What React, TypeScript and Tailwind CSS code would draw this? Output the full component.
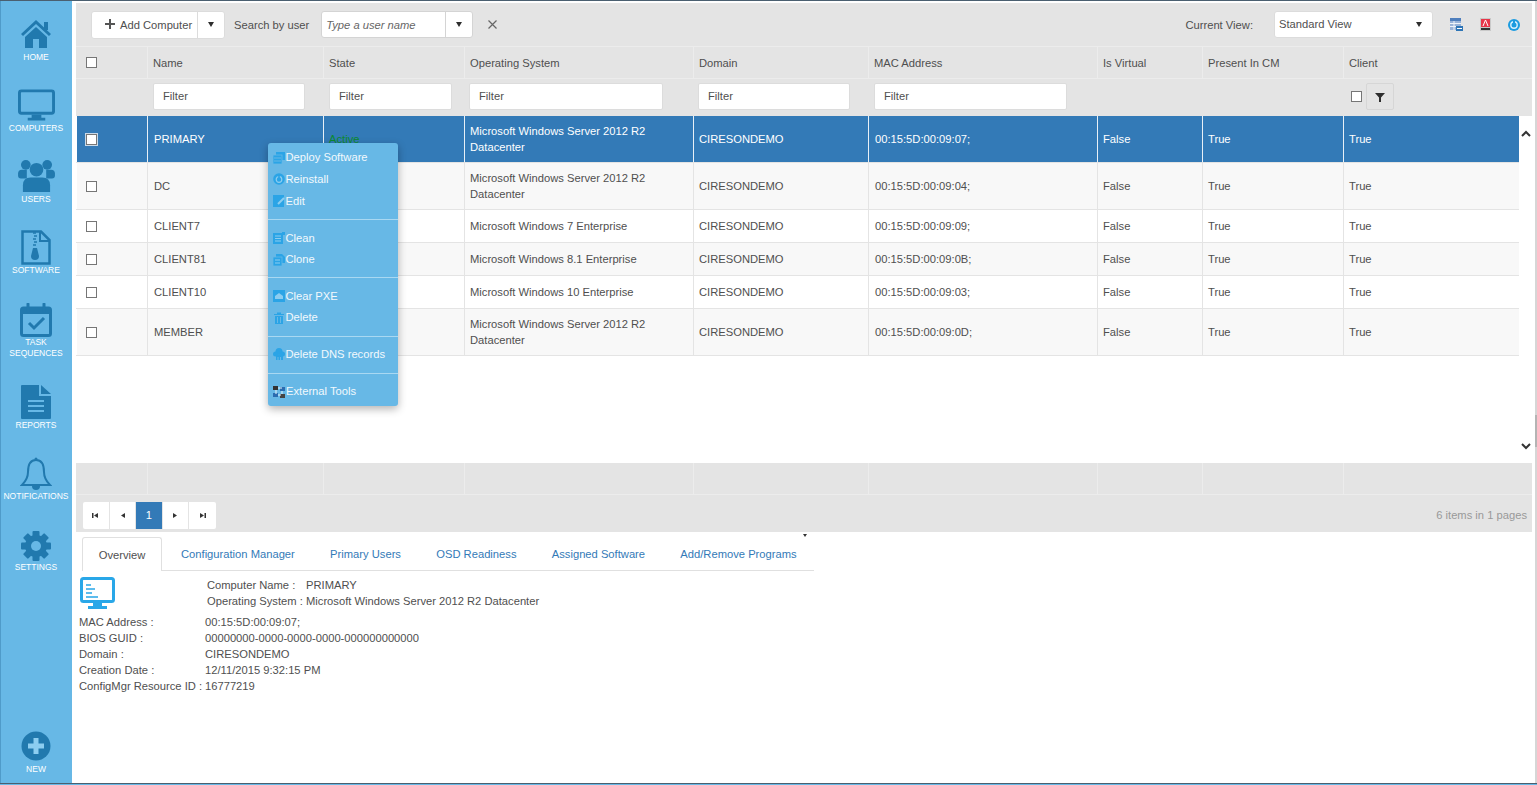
import type { ReactNode } from 'react';

const COLS = 'grid grid-cols-[71px_176px_141px_229px_175px_229px_105px_141px_176px]';
const ICON = '#2179ae';
const MI = '#2ba4e6';

const rows = [
  { name: 'PRIMARY', os: ['Microsoft Windows Server 2012 R2', 'Datacenter'], mac: '07', h: 'h-[47px]', alt: false, selected: true },
  { name: 'DC', os: ['Microsoft Windows Server 2012 R2', 'Datacenter'], mac: '04', h: 'h-[47px]', alt: true, selected: false },
  { name: 'CLIENT7', os: ['Microsoft Windows 7 Enterprise'], mac: '09', h: 'h-[33px]', alt: false, selected: false },
  { name: 'CLIENT81', os: ['Microsoft Windows 8.1 Enterprise'], mac: '0B', h: 'h-[33px]', alt: true, selected: false },
  { name: 'CLIENT10', os: ['Microsoft Windows 10 Enterprise'], mac: '03', h: 'h-[33px]', alt: false, selected: false },
  { name: 'MEMBER', os: ['Microsoft Windows Server 2012 R2', 'Datacenter'], mac: '0D', h: 'h-[47px]', alt: true, selected: false },
];

function HomeIcon() {
  return (
    <svg width="32" height="30" viewBox="0 0 32 30" fill={ICON}>
      <path d="M16 1 L31 15 L29 17 L16 5 L3 17 L1 15 Z" />
      <rect x="24" y="3" width="4" height="8" />
      <path d="M16 8 L27 18 V29 H19 V20 H13 V29 H5 V18 Z" />
    </svg>
  );
}

function ComputerIcon() {
  return (
    <svg width="37" height="32" viewBox="0 0 38 32">
      <rect x="1.500" y="1.500" width="35" height="23" rx="2" fill="none" stroke={ICON} strokeWidth="3" />
      <path d="M14 26 H24 V29 H28 V32 H10 V29 H14 Z" fill={ICON} />
    </svg>
  );
}

function UsersIcon() {
  return (
    <svg width="37" height="33" viewBox="0 0 38 34" fill={ICON}>
      <circle cx="8" cy="6" r="5" />
      <circle cx="30" cy="6" r="5" />
      <path d="M0 15 Q0 11 4 11 H9 V20 H3 Q0 20 0 17 Z" />
      <path d="M38 15 Q38 11 34 11 H29 V20 H35 Q38 20 38 17 Z" />
      <circle cx="19" cy="11" r="7" />
      <path d="M5 34 V27 Q5 19 13 19 H25 Q33 19 33 27 V34 Z" />
    </svg>
  );
}

function SoftwareIcon() {
  return (
    <svg width="30" height="35" viewBox="0 0 30 35" fill="none" stroke={ICON} strokeWidth="2.500">
      <path d="M1.500 1.500 H20 L28.500 10 V33.500 H1.500 Z" />
      <path d="M19 2 V11 H28" strokeWidth="2" />
      <path d="M12 3 H15 M13 6 H16 M12 9 H15 M13 12 H16 M12 15 H15" strokeWidth="1.600" />
      <path d="M12 18 H16 L18 26 A4 4 0 0 1 10 26 Z" fill={ICON} stroke="none" />
    </svg>
  );
}

function TaskIcon() {
  return (
    <svg width="32" height="34" viewBox="0 0 32 34" fill="none" stroke={ICON}>
      <rect x="1.500" y="5" width="29" height="27.500" rx="2" strokeWidth="3" />
      <rect x="1" y="5" width="30" height="6" fill={ICON} stroke="none" />
      <path d="M8 1 V8 M24 1 V8" strokeWidth="3" strokeLinecap="round" />
      <path d="M9 20 L14 25 L24 15" strokeWidth="3" />
    </svg>
  );
}

function ReportIcon() {
  return (
    <svg width="30" height="34" viewBox="0 0 30 34">
      <path d="M0 1 Q0 0 1 0 H18 V11 H30 V33 Q30 34 29 34 H1 Q0 34 0 33 Z" fill={ICON} />
      <path d="M20 0 L30 9 H20 Z" fill={ICON} />
      <path d="M7 16 H23 M7 21 H23 M7 26 H23" stroke="#67b8e6" strokeWidth="2" />
    </svg>
  );
}

function BellIcon() {
  return (
    <svg width="32" height="34" viewBox="0 0 32 34" fill="none" stroke={ICON} strokeWidth="2">
      <path d="M16 3 C9 3 8 9 8 15 C8 21 5 25 2 28 H30 C27 25 24 21 24 15 C24 9 23 3 16 3 Z" />
      <circle cx="16" cy="2" r="1.500" fill={ICON} stroke="none" />
      <path d="M12 29 A4 4 0 0 0 20 29 Z" fill={ICON} stroke="none" />
    </svg>
  );
}

function GearIcon() {
  return (
    <svg width="30" height="30" viewBox="0 0 30 30">
      <g fill={ICON}>
        <circle cx="15" cy="15" r="11" />
        {[0, 45, 90, 135, 180, 225, 270, 315].map((a) => (
          <rect key={a} x="11.500" y="0" width="7" height="6" rx="1" transform={`rotate(${a} 15 15)`} />
        ))}
      </g>
      <circle cx="15" cy="15" r="5" fill="#67b8e6" />
    </svg>
  );
}

function PlusCircleIcon() {
  return (
    <svg width="30" height="30" viewBox="0 0 30 30">
      <circle cx="15" cy="15" r="14.500" fill={ICON} />
      <path d="M12.500 7 H17.500 V12.500 H23 V17.500 H17.500 V23 H12.500 V17.500 H7 V12.500 H12.500 Z" fill="#8ccdf0" />
    </svg>
  );
}

function NavItem({ icon, label, h = 'h-[71px]', box = 'h-[37px]' }: { icon: ReactNode; label: ReactNode; h?: string; box?: string }) {
  return (
    <div className={`flex flex-col items-center ${h}`}>
      <div className={`flex items-end justify-center ${box}`}>{icon}</div>
      <div className="text-center text-[8.500px] leading-[11px] text-white">{label}</div>
    </div>
  );
}

function Sidebar() {
  return (
    <aside className="flex w-[72px] shrink-0 flex-col border-l border-[#4f9bc9] bg-[#67b8e6] pt-[11px] pr-[1px]">
      <NavItem box="h-[40px] pb-[3px]" icon={<HomeIcon />} label="HOME" />
      <NavItem box="h-[40px] pb-[2px]" icon={<ComputerIcon />} label="COMPUTERS" />
      <NavItem box="h-[40px] pb-[2px]" icon={<UsersIcon />} label="USERS" />
      <NavItem h="h-[72px]" box="h-[40px]" icon={<SoftwareIcon />} label="SOFTWARE" />
      <NavItem h="h-[83px]" box="h-[40px]" icon={<TaskIcon />} label={<>TASK<br />SEQUENCES</>} />
      <NavItem box="h-[40px] pb-[1px]" icon={<ReportIcon />} label="REPORTS" />
      <NavItem box="h-[40px]" icon={<BellIcon />} label="NOTIFICATIONS" />
      <NavItem box="h-[40px] pb-[1px]" icon={<GearIcon />} label="SETTINGS" />
      <div className="mt-auto mb-[10px] flex flex-col items-center">
        <PlusCircleIcon />
        <div className="mt-[3px] text-[8.500px] leading-[11px] text-white">NEW</div>
      </div>
    </aside>
  );
}

function Caret() {
  return <span className="inline-block h-0 w-0 border-x-[3.500px] border-t-[5px] border-x-transparent border-t-[#2e2e2e]" />;
}

function CheckBox({ className = '' }: { className?: string }) {
  return <span className={`inline-block h-[11px] w-[11px] border border-[#767676] bg-white ${className}`} />;
}

function Toolbar() {
  return (
    <div className="flex h-[43px] items-center bg-[#e4e4e4] pr-[12px] pl-[15px]">
      <div className="flex h-[28px] w-[134px] items-center rounded-[3px] border border-[#dcdcdc] bg-white">
        <div className="flex flex-1 items-center pl-[13px]">
          <svg width="10" height="10" viewBox="0 0 10 10"><path d="M4 0 H6 V4 H10 V6 H6 V10 H4 V6 H0 V4 H4 Z" fill="#555" /></svg>
          <span className="ml-[5px] pt-[1px]">Add Computer</span>
        </div>
        <div className="flex h-full w-[27px] items-center justify-center border-l border-[#dcdcdc]"><Caret /></div>
      </div>
      <span className="ml-[9px] pt-[1px]">Search by user</span>
      <div className="ml-[12px] flex h-[27px] w-[152px] items-center rounded-[3px] border border-[#d4d4d4] bg-white">
        <span className="flex-1 pt-[1px] pl-[4px] text-[#666] italic">Type a user name</span>
        <div className="flex h-full w-[27px] items-center justify-center border-l border-[#d4d4d4]"><Caret /></div>
      </div>
      <svg className="ml-[15px]" width="9" height="9" viewBox="0 0 9 9"><path d="M0.500 0.500 L8.500 8.500 M8.500 0.500 L0.500 8.500" stroke="#666" strokeWidth="1.200" /></svg>
      <span className="ml-auto pt-[1px]">Current View:</span>
      <div className="ml-[21px] flex h-[27px] w-[159px] items-center justify-between rounded-[3px] border border-[#dcdcdc] bg-white pr-[10px] pl-[4px]">
        <span>Standard View</span>
        <Caret />
      </div>
      <svg className="ml-[17px]" width="13" height="13" viewBox="0 0 13 13">
        <rect x="0" y="0" width="11" height="12" fill="#9ab3d8" />
        <rect x="0" y="0" width="11" height="3" fill="#4f7fbd" />
        <path d="M0 5.500 H11 M0 8.500 H11 M4 3 V12" stroke="#eef3f9" />
        <rect x="6" y="8" width="7" height="5" fill="#2e75b6" />
        <rect x="7" y="10" width="5" height="1" fill="#fff" />
      </svg>
      <svg className="ml-[17px]" width="11" height="13" viewBox="0 0 11 13">
        <rect width="11" height="13" fill="#c9c9c9" />
        <rect x="1" y="1" width="9" height="8" fill="#e8364a" />
        <path d="M3 8 L5.500 2 L8 8" stroke="#fff" fill="none" />
        <rect x="1" y="10" width="9" height="2" fill="#333" />
      </svg>
      <svg className="ml-[17px]" width="12" height="12" viewBox="0 0 12 12">
        <circle cx="6" cy="6" r="6" fill="#1b9be0" />
        <circle cx="6" cy="6" r="3.200" fill="none" stroke="#d9f0fc" strokeWidth="1.400" />
        <rect x="5" y="1" width="2" height="3" fill="#1b9be0" />
      </svg>
    </div>
  );
}

function Filter({ w }: { w: string }) {
  return (
    <div className={`flex h-[27px] ${w} items-center rounded-[2px] border border-[#dcdcdc] bg-white pl-[9px]`}>Filter</div>
  );
}

function HeaderRows() {
  const heads = ['Name', 'State', 'Operating System', 'Domain', 'MAC Address', 'Is Virtual', 'Present In CM', 'Client'];
  return (
    <div className="bg-[#e4e4e4]">
      <div className={`${COLS} h-[33px] border-y border-[#ececec]`}>
        <div className="flex items-center pl-[10px]"><CheckBox /></div>
        {heads.map((h) => (
          <div key={h} className="flex items-center border-l border-[#ececec] pt-[1px] pl-[5px]">{h}</div>
        ))}
      </div>
      <div className={`${COLS} h-[37px] items-center pb-[2px]`}>
        <div />
        <div className="pl-[6px]"><Filter w="w-[152px]" /></div>
        <div className="pl-[6px]"><Filter w="w-[123px]" /></div>
        <div className="pl-[5px]"><Filter w="w-[194px]" /></div>
        <div className="pl-[5px]"><Filter w="w-[152px]" /></div>
        <div className="pl-[6px]"><Filter w="w-[193px]" /></div>
        <div />
        <div />
        <div className="flex items-center pl-[8px]">
          <CheckBox />
          <div className="ml-[4px] flex h-[27px] w-[28px] items-center justify-center rounded-[2px] border border-[#d6d6d6]">
            <svg width="10" height="10" viewBox="0 0 10 10"><path d="M0 1 H10 L6 5.500 V10 H4 V5.500 Z" fill="#2e2e2e" /></svg>
          </div>
        </div>
      </div>
    </div>
  );
}

function Row({ r }: { r: (typeof rows)[number] }) {
  const line = r.selected ? 'border-[#e8f0f7]' : 'border-[#e4e4e4]';
  const bg = r.selected ? 'bg-[#337ab7] text-white' : r.alt ? 'bg-[#f8f8f8]' : 'bg-white';
  const cell = `flex items-center border-l pl-[5px] ${line}`;
  return (
    <div className={`${COLS} ${r.h} border-b border-[#e4e4e4] ${bg}`}>
      <div className="flex items-center border-l border-white pl-[9px]">
        <CheckBox className={r.selected ? 'outline outline-1 outline-[#c9d9e8]' : ''} />
      </div>
      <div className={`${cell} pl-[6px]`}>{r.name}</div>
      <div className={`${cell} ${r.selected ? 'text-[#0b8a2f]' : ''}`}>{r.selected ? 'Active' : ''}</div>
      <div className={`${cell} leading-[16px]`}><div>{r.os.map((t) => <div key={t}>{t}</div>)}</div></div>
      <div className={cell}>CIRESONDEMO</div>
      <div className={`${cell} pl-[6px]`}>00:15:5D:00:09:{r.mac};</div>
      <div className={cell}>False</div>
      <div className={cell}>True</div>
      <div className={cell}>True</div>
    </div>
  );
}

function Chevron({ up }: { up?: boolean }) {
  return (
    <svg width="10" height="7" viewBox="0 0 10 7" fill="none" stroke="#333" strokeWidth="2">
      <path d={up ? 'M1 6 L5 2 L9 6' : 'M1 1 L5 5 L9 1'} />
    </svg>
  );
}

function Grid() {
  return (
    <div className="flex h-[347px]">
      <div className="w-[1443px]">
        {rows.map((r) => <Row key={r.name} r={r} />)}
      </div>
      <div className="flex w-[13px] flex-col items-center justify-between pt-[14px] pb-[13px]">
        <Chevron up />
        <Chevron />
      </div>
    </div>
  );
}

function GridFooter() {
  return (
    <div className={`${COLS} h-[32px] border-b border-[#ececec] bg-[#e4e4e4]`}>
      <div />
      {Array.from({ length: 8 }, (_, i) => <div key={i} className="border-l border-[#ececec]" />)}
    </div>
  );
}

function PagerBtn({ children, active }: { children: ReactNode; active?: boolean }) {
  return (
    <div className={`flex h-[27px] w-[26.500px] items-center justify-center border-r border-[#e4e4e4] last:border-r-0 ${active ? 'bg-[#337ab7] text-white' : 'bg-white'}`}>
      {children}
    </div>
  );
}

function Tri({ dir, bar }: { dir: 'l' | 'r'; bar?: boolean }) {
  return (
    <svg width="7" height="7" viewBox="0 0 7 7" fill="#333">
      {dir === 'l' ? <path d="M6 1 V6 L2 3.500 Z" /> : <path d="M1 1 V6 L5 3.500 Z" />}
      {bar && <rect x={dir === 'l' ? 0 : 5.500} y="1" width="1.500" height="5" />}
    </svg>
  );
}

function Pager() {
  return (
    <div className="flex h-[37px] items-center justify-between bg-[#e4e4e4] pt-[3px] pr-[5px] pl-[6px]">
      <div className="flex overflow-hidden rounded-[3px] border border-[#e4e4e4]">
        <PagerBtn><Tri dir="l" bar /></PagerBtn>
        <PagerBtn><Tri dir="l" /></PagerBtn>
        <PagerBtn active>1</PagerBtn>
        <PagerBtn><Tri dir="r" /></PagerBtn>
        <PagerBtn><Tri dir="r" bar /></PagerBtn>
      </div>
      <span className="text-[#999]">6 items in 1 pages</span>
    </div>
  );
}

function Tabs() {
  const tabs = ['Configuration Manager', 'Primary Users', 'OSD Readiness', 'Assigned Software', 'Add/Remove Programs'];
  return (
    <div className="mt-[5px] ml-[6px] flex h-[34px] w-[732px] border-b border-[#e0e0e0]">
      <div className="flex h-[34px] w-[80px] items-center justify-center rounded-t-[3px] border-x border-t border-[#e0e0e0] bg-white pt-[1px]">Overview</div>
      <div className="ml-[19px] flex gap-[35.300px]">
        {tabs.map((t) => (
          <div key={t} className="flex items-center pt-[1px] text-[#337ab7]">{t}</div>
        ))}
      </div>
    </div>
  );
}

function Overview() {
  const details = [
    ['MAC Address :', '00:15:5D:00:09:07;'],
    ['BIOS GUID :', '00000000-0000-0000-0000-000000000000'],
    ['Domain :', 'CIRESONDEMO'],
    ['Creation Date :', '12/11/2015 9:32:15 PM'],
    ['ConfigMgr Resource ID :', '16777219'],
  ];
  return (
    <div className="leading-[16px]">
      <div className="flex h-[43px] items-start pt-[6px] pl-[4px]">
        <svg width="35" height="33" viewBox="0 0 35 33">
          <rect x="1.500" y="1.500" width="32" height="23" rx="2" fill="#fff" stroke="#29a7e8" strokeWidth="3" />
          <path d="M6 8 H11 M6 12 H15 M6 16 H12 M6 20 H18" stroke="#29a7e8" strokeWidth="1.500" />
          <path d="M13 26 H22 V29 H27 V32 H8 V29 H13 Z" fill="#29a7e8" />
        </svg>
        <div className="ml-[92px] grid grid-cols-[99px_auto]">
          <div>Computer Name :</div><div>PRIMARY</div>
          <div>Operating System :</div><div>Microsoft Windows Server 2012 R2 Datacenter</div>
        </div>
      </div>
      <div className="ml-[3px] grid grid-cols-[126px_auto]">
        {details.map(([k, v]) => (
          <div key={k} className="contents">
            <div className="whitespace-nowrap">{k}</div>
            <div>{v}</div>
          </div>
        ))}
      </div>
    </div>
  );
}

const menuIcons: Record<string, ReactNode> = {
  'Deploy Software': (
    <>
      <rect x="3" y="0" width="9" height="8" fill={MI} />
      <rect x="0" y="3" width="9" height="9" fill={MI} stroke="#67b8e6" strokeWidth="0.800" />
      <path d="M1 6 H8 M1 9 H8" stroke="#67b8e6" />
    </>
  ),
  Reinstall: (
    <>
      <circle cx="6" cy="6" r="5.800" fill={MI} />
      <circle cx="6" cy="6.500" r="2.800" fill="none" stroke="#8ccdf0" strokeWidth="1.200" />
      <rect x="5.200" y="2" width="1.600" height="3" fill={MI} />
    </>
  ),
  Edit: (
    <>
      <rect x="0" y="0" width="11" height="12" fill={MI} />
      <path d="M5 9 L11 3" stroke="#8ccdf0" strokeWidth="2" />
    </>
  ),
  Clean: (
    <>
      <rect x="0" y="1" width="10" height="11" fill={MI} />
      <path d="M2 4 H8 M2 6.500 H8 M2 9 H8" stroke="#8ccdf0" />
      <rect x="9" y="0" width="3" height="3" fill={MI} />
    </>
  ),
  Clone: (
    <>
      <path d="M3 0 H9 L12 3 V9 H3 Z" fill={MI} />
      <rect x="0" y="3" width="9" height="9" fill={MI} stroke="#67b8e6" strokeWidth="0.800" />
      <path d="M2 6 H7 M2 9 H7" stroke="#8ccdf0" />
    </>
  ),
  'Clear PXE': (
    <>
      <rect x="0" y="0" width="12" height="12" fill={MI} />
      <path d="M6 3 L10 6 V9 H2 V6 Z" fill="#8ccdf0" />
    </>
  ),
  Delete: (
    <path d="M1 2 H11 V3 H1 Z M4 0.500 H8 V2 H4 Z M2 4 H10 V12 H2 Z M4 5 V11 H5 V5 Z M7 5 V11 H8 V5 Z" fill={MI} fillRule="evenodd" />
  ),
  'Delete DNS records': (
    <>
      <circle cx="6" cy="3.500" r="3.500" fill={MI} />
      <circle cx="2.500" cy="6" r="2.500" fill={MI} />
      <circle cx="9.500" cy="6" r="2.500" fill={MI} />
      <path d="M3 7 H10 V12 H8 V9 H7 V12 H5.500 V9 H4.500 V12 H3 Z" fill={MI} />
    </>
  ),
  'External Tools': (
    <>
      <rect x="0" y="0" width="5" height="4" fill="#333" />
      <rect x="7" y="1" width="5" height="4" fill="#2b6cb0" />
      <rect x="0" y="7" width="5" height="4" fill="#2b6cb0" />
      <rect x="7" y="8" width="5" height="4" fill="#444" />
      <path d="M5 2 H9 M3 4 V8 M5 9 H8 M9 5 V8" stroke="#e8f4fb" />
    </>
  ),
};

function MenuEntry({ label }: { label: string }) {
  return (
    <div className="flex h-[21.600px] items-center pl-[5px]">
      <svg className="shrink-0" width="12" height="12" viewBox="0 0 12 12">{menuIcons[label]}</svg>
      <span className={label === 'External Tools' ? 'ml-[1px]' : 'ml-[0.500px]'}>{label}</span>
    </div>
  );
}

function ContextMenu() {
  const groups = [
    { items: ['Deploy Software', 'Reinstall', 'Edit'], cls: 'pt-[4px] pb-[7px]' },
    { items: ['Clean', 'Clone'], cls: 'border-t border-[#a9d8f2] pt-[7.500px] pb-[6.500px]' },
    { items: ['Clear PXE', 'Delete'], cls: 'border-t border-[#a9d8f2] pt-[7.500px] pb-[7px]' },
    { items: ['Delete DNS records'], cls: 'border-t border-[#a9d8f2] pt-[7px] pb-[8px]' },
    { items: ['External Tools'], cls: 'border-t border-[#a9d8f2] pt-[6.500px] pb-[3.500px]' },
  ];
  return (
    <div className="absolute top-[142px] left-[268px] w-[130px] rounded-[3px] bg-[#67b8e6] text-[#f2f9fd] shadow-[0_3px_8px_rgba(0,0,0,0.3)]">
      {groups.map((g) => (
        <div key={g.items[0]} className={g.cls}>
          {g.items.map((l) => <MenuEntry key={l} label={l} />)}
        </div>
      ))}
    </div>
  );
}

export default function App() {
  return (
    <div className="relative flex h-[785px] w-[1537px] overflow-hidden border-t border-[#4a5f70] bg-white font-['Liberation_Sans',sans-serif] text-[11.200px] text-[#4f4f4f]">
      <Sidebar />
      <main className="ml-[4px] flex h-[782px] w-[1456px] flex-col pt-[2px]">
        <Toolbar />
        <HeaderRows />
        <Grid />
        <GridFooter />
        <Pager />
        <Tabs />
        <Overview />
      </main>
      <ContextMenu />
      <span className="absolute top-[533px] left-[803px] h-0 w-0 border-x-[2.500px] border-t-[3px] border-x-transparent border-t-[#333]" />
      <div className="absolute top-0 right-0 bottom-0 w-[2px] bg-[#d6d6d6]" />
      <div className="absolute top-[414px] right-0 h-[32px] w-[2px] bg-[#b4b4b4]" />
      <div className="absolute right-0 bottom-0 left-0 h-[2px] border-t border-[#4a5f70] bg-[#67b8e6]" />
    </div>
  );
}
